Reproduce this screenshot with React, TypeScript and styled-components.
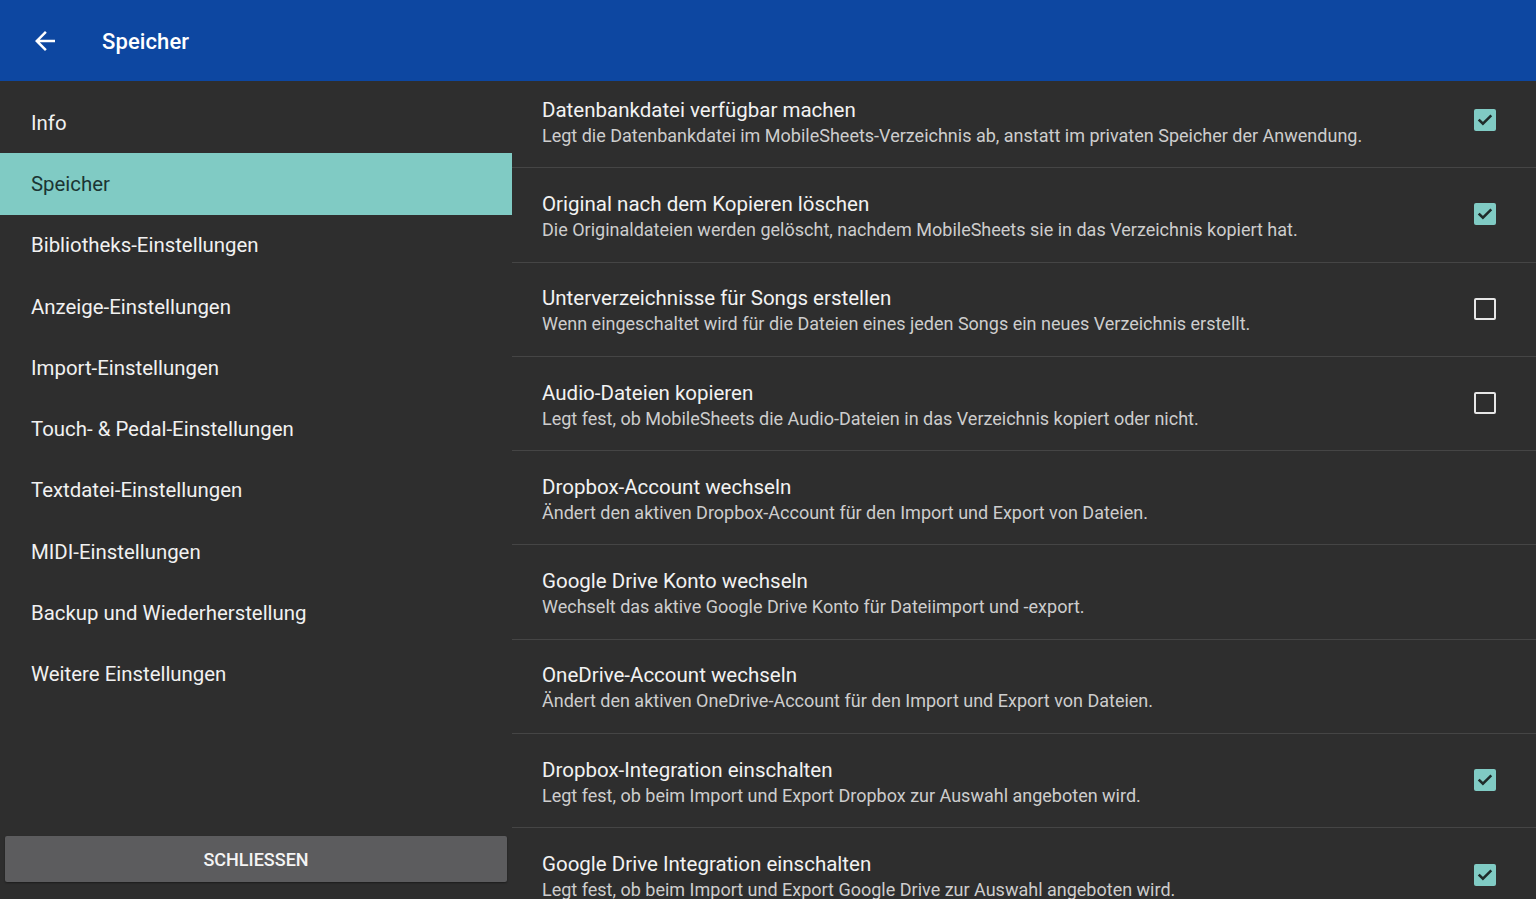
import React from 'react';
import styled, { createGlobalStyle } from 'styled-components';

const GlobalStyle = createGlobalStyle`
  html, body {
    margin: 0;
    padding: 0;
    background: #2e2e2e;
    font-family: Roboto, "Noto Sans", sans-serif;
    overflow: hidden;
  }
`;

const Screen = styled.div`
  width: 1536px;
  height: 899px;
  display: flex;
  flex-direction: column;
  background: #2e2e2e;
  overflow: hidden;
`;

const TopBar = styled.header`
  height: 81px;
  flex-shrink: 0;
  display: flex;
  align-items: center;
  background: #0d47a1;
  color: #ffffff;
`;

const BackButton = styled.button`
  width: 92px;
  height: 81px;
  padding: 0 0 0 30px;
  display: flex;
  align-items: center;
  border: 0;
  background: transparent;
  color: #ffffff;
`;

const BarTitle = styled.h1`
  margin: 2px 0 0 10px;
  font-size: 22px;
  font-weight: 500;
  letter-spacing: 0.1px;
`;

const Body = styled.div`
  flex: 1;
  display: flex;
  min-height: 0;
`;

const Sidebar = styled.nav`
  width: 512px;
  flex-shrink: 0;
  display: flex;
  flex-direction: column;
  padding-top: 11px;
`;

const NavList = styled.div`
  flex: 1;
  display: flex;
  flex-direction: column;
`;

const NavItem = styled.div<{ $active?: boolean }>`
  height: 61.3px;
  display: flex;
  align-items: center;
  padding-left: 31px;
  font-size: 20.4px;
  color: ${p => (p.$active ? '#1b3533' : '#f1f1f1')};
  background: ${p => (p.$active ? '#80cbc4' : 'transparent')};
`;

const CloseButton = styled.button`
  margin: 0 5px 17px 5px;
  height: 46px;
  border: 0;
  border-radius: 2px;
  background: #5c5c5e;
  color: #f4f4f4;
  font-family: Roboto, sans-serif;
  font-size: 18px;
  font-weight: 500;
  box-shadow: 0 1px 2px rgba(0, 0, 0, 0.4);
`;

const Content = styled.section`
  flex: 1;
  overflow: hidden;
`;

const PrefList = styled.div`
  margin-top: -7px;
`;

const PrefRow = styled.div`
  height: 94.3px;
  box-sizing: border-box;
  display: flex;
  align-items: center;
  padding: 0 40px 0 30px;
  border-bottom: 1.5px solid #454545;
`;

const PrefText = styled.div`
  flex: 1;
  display: flex;
  flex-direction: column;
  gap: 3px;
  padding-top: 2px;
`;

const PrefTitle = styled.span`
  font-size: 20.5px;
  color: #f2f2f2;
`;

const PrefSummary = styled.span`
  font-size: 18px;
  color: #cdcdcd;
`;

const Box = styled.div<{ $checked: boolean }>`
  width: 22px;
  height: 22px;
  box-sizing: border-box;
  border-radius: 2px;
  display: flex;
  align-items: center;
  justify-content: center;
  background: ${p => (p.$checked ? '#80cbc4' : 'transparent')};
  border: ${p => (p.$checked ? '0' : '2px solid #e6e6e6')};
  margin-top: -1px;
`;

const BackArrow = () => (
  <svg width="30" height="30" viewBox="0 0 24 24" fill="#ffffff">
    <path d="M20 11H7.83l5.59-5.59L12 4l-8 8 8 8 1.41-1.41L7.83 13H20v-2z" />
  </svg>
);

const Check = () => (
  <svg width="20" height="20" viewBox="0 0 24 24" fill="none" stroke="#1f2b2a" strokeWidth="3" strokeLinecap="square">
    <path d="M5.5 12.5l4 4L18.5 7.5" />
  </svg>
);

const Checkbox = ({ checked }: { checked: boolean }) => (
  <Box $checked={checked}>{checked && <Check />}</Box>
);

const sections = [
  'Info',
  'Speicher',
  'Bibliotheks-Einstellungen',
  'Anzeige-Einstellungen',
  'Import-Einstellungen',
  'Touch- & Pedal-Einstellungen',
  'Textdatei-Einstellungen',
  'MIDI-Einstellungen',
  'Backup und Wiederherstellung',
  'Weitere Einstellungen',
];

type Pref = { title: string; summary: string; checked?: boolean };

const prefs: Pref[] = [
  {
    title: 'Datenbankdatei verfügbar machen',
    summary: 'Legt die Datenbankdatei im MobileSheets-Verzeichnis ab, anstatt im privaten Speicher der Anwendung.',
    checked: true,
  },
  {
    title: 'Original nach dem Kopieren löschen',
    summary: 'Die Originaldateien werden gelöscht, nachdem MobileSheets sie in das Verzeichnis kopiert hat.',
    checked: true,
  },
  {
    title: 'Unterverzeichnisse für Songs erstellen',
    summary: 'Wenn eingeschaltet wird für die Dateien eines jeden Songs ein neues Verzeichnis erstellt.',
    checked: false,
  },
  {
    title: 'Audio-Dateien kopieren',
    summary: 'Legt fest, ob MobileSheets die Audio-Dateien in das Verzeichnis kopiert oder nicht.',
    checked: false,
  },
  {
    title: 'Dropbox-Account wechseln',
    summary: 'Ändert den aktiven Dropbox-Account für den Import und Export von Dateien.',
  },
  {
    title: 'Google Drive Konto wechseln',
    summary: 'Wechselt das aktive Google Drive Konto für Dateiimport und -export.',
  },
  {
    title: 'OneDrive-Account wechseln',
    summary: 'Ändert den aktiven OneDrive-Account für den Import und Export von Dateien.',
  },
  {
    title: 'Dropbox-Integration einschalten',
    summary: 'Legt fest, ob beim Import und Export Dropbox zur Auswahl angeboten wird.',
    checked: true,
  },
  {
    title: 'Google Drive Integration einschalten',
    summary: 'Legt fest, ob beim Import und Export Google Drive zur Auswahl angeboten wird.',
    checked: true,
  },
];

export default function App() {
  return (
    <>
      <GlobalStyle />
      <Screen>
        <TopBar>
          <BackButton aria-label="Zurück">
            <BackArrow />
          </BackButton>
          <BarTitle>Speicher</BarTitle>
        </TopBar>

        <Body>
          <Sidebar>
            <NavList>
              {sections.map(s => (
                <NavItem key={s} $active={s === 'Speicher'}>
                  {s}
                </NavItem>
              ))}
            </NavList>
            <CloseButton>SCHLIESSEN</CloseButton>
          </Sidebar>

          <Content>
            <PrefList>
              {prefs.map(p => (
                <PrefRow key={p.title}>
                  <PrefText>
                    <PrefTitle>{p.title}</PrefTitle>
                    <PrefSummary>{p.summary}</PrefSummary>
                  </PrefText>
                  {p.checked !== undefined && <Checkbox checked={p.checked} />}
                </PrefRow>
              ))}
            </PrefList>
          </Content>
        </Body>
      </Screen>
    </>
  );
}
